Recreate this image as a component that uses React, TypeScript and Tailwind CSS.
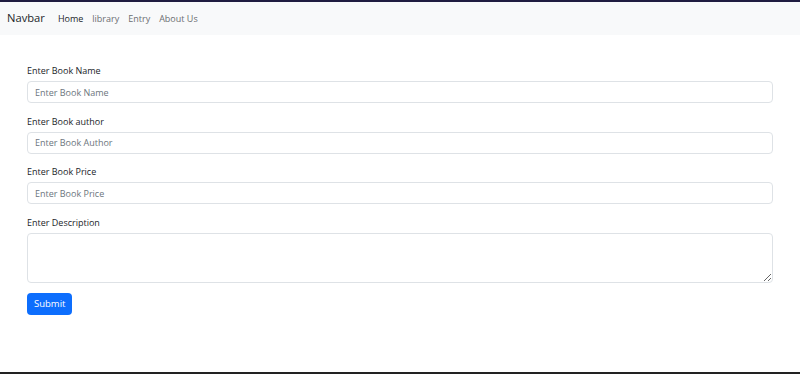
import React from "react";

const fields = [
	{ label: "Enter Book Name", placeholder: "Enter Book Name" },
	{ label: "Enter Book author", placeholder: "Enter Book Author" },
	{ label: "Enter Book Price", placeholder: "Enter Book Price" },
];

const links = ["Home", "library", "Entry", "About Us"];

export default function App() {
	return (
		<div className="h-[374px] flex flex-col bg-white font-['Open_Sans',sans-serif] border-t-2 border-t-[#1f1c40] border-b-2 border-b-[#222222]">
			<nav className="h-[33px] bg-[#f8f9fa] flex items-center px-[7px]">
				<a href="#" className="text-[11.2px] text-[#212529] mr-[13px]">
					Navbar
				</a>
				<ul className="flex gap-[9px] text-[9px]">
					{links.map((link, idx) => (
						<li key={link}>
							<a
								href="#"
								className={idx === 0 ? "text-[#212529]" : "text-[#6b6e71]"}
							>
								{link}
							</a>
						</li>
					))}
				</ul>
			</nav>

			<form className="px-[27px] pt-[28px]">
				{fields.map((field) => (
					<div key={field.label} className="mb-[10.7px]">
						<label className="block text-[9px] leading-[15px] text-[#212529] mb-[3px]">
							{field.label}
						</label>
						<input
							type="text"
							placeholder={field.placeholder}
							className="block w-full h-[22px] px-[7px] text-[9px] border border-[#dee2e6] rounded-[4px] placeholder:text-[#6c757d] outline-none"
						/>
					</div>
				))}
				<div className="mb-[10px]">
					<label className="block text-[9px] leading-[15px] text-[#212529] mb-[3px]">
						Enter Description
					</label>
					<textarea className="block w-full h-[50px] px-[7px] py-[4px] text-[9px] border border-[#dee2e6] rounded-[4px] outline-none" />
				</div>
				<button
					type="button"
					className="block h-[22px] px-[7px] bg-[#0d6efd] text-white text-[9.5px] rounded-[4px]"
				>
					Submit
				</button>
			</form>
		</div>
	);
}
